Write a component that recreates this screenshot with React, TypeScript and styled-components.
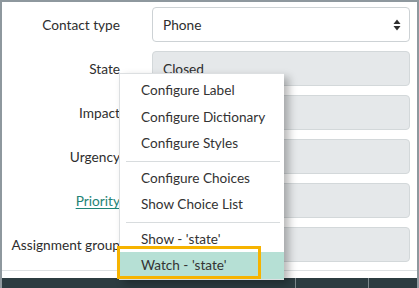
import { FC } from 'react'
import styled, { createGlobalStyle } from 'styled-components'

const GlobalStyle = createGlobalStyle`
  html, body {
    margin: 0;
    padding: 0;
    background: #fff;
  }
  body {
    font-family: 'Lato', 'Liberation Sans', sans-serif;
    color: #2e2e2e;
  }
`

const Frame = styled.div`
  position: relative;
  width: 419px;
  height: 288px;
  box-sizing: border-box;
  border-top: 2px solid #8e989e;
  border-left: 2px solid #8e989e;
  border-right: 2px solid #8e989e;
  overflow: hidden;
  display: flex;
  flex-direction: column;
`

const Form = styled.div`
  display: flex;
  flex-direction: column;
  gap: 9px;
  padding: 5px 7px 0 0;
`

const Row = styled.div`
  display: grid;
  grid-template-columns: 118px 1fr;
  column-gap: 32px;
  align-items: center;
  height: 35px;
`

const Label = styled.div<{ $link?: boolean }>`
  text-align: right;
  font-size: 13.7px;
  color: ${({ $link }) => ($link ? '#1f8476' : '#2e2e2e')};
  text-decoration: ${({ $link }) => ($link ? 'underline' : 'none')};
  text-underline-offset: 2px;
  white-space: nowrap;
`

const Field = styled.div<{ $select?: boolean }>`
  height: 35px;
  box-sizing: border-box;
  border: 1px solid ${({ $select }) => ($select ? '#cdd2d5' : '#d3d8da')};
  border-radius: 4px;
  background: ${({ $select }) => ($select ? '#fff' : '#e5e8ea')};
  display: flex;
  align-items: center;
  justify-content: space-between;
  padding: 0 8px 0 10px;
  font-size: 13.7px;
  color: #2e2e2e;
`

const Footer = styled.div`
  margin-top: auto;
  display: flex;
  flex-direction: column;
`

const FooterLine = styled.div`
  height: 1px;
  background: #dde1e3;
  margin-bottom: 7px;
`

const DarkBar = styled.div`
  height: 10px;
  background: #2c3c41;
  display: flex;
  padding-left: 293px;
  gap: 72px;
`

const BarTick = styled.div`
  width: 1px;
  height: 100%;
  background: #7c888c;
`

const Menu = styled.div`
  position: absolute;
  left: 117px;
  top: 71px;
  width: 164px;
  background: #fff;
  border: 1px solid #dcdfe1;
  border-right: none;
  box-shadow: 5px 4px 8px rgba(0, 0, 0, 0.28);
  padding-top: 3px;
  display: flex;
  flex-direction: column;
`

const MenuItem = styled.div<{ $active?: boolean }>`
  height: 26.5px;
  display: flex;
  align-items: center;
  padding-left: 21px;
  font-size: 13.6px;
  color: #333;
  background: ${({ $active }) => ($active ? '#b6e0d5' : 'transparent')};
  white-space: nowrap;
`

const Separator = styled.div`
  height: 1px;
  background: #d8dcde;
  margin: 4px 4px 3px 6px;
`

const Highlight = styled.div`
  position: absolute;
  left: 115px;
  top: 244px;
  width: 144px;
  height: 33px;
  box-sizing: border-box;
  border: 3px solid #f6b300;
`

const SelectArrows: FC = () => (
  <svg width='8' height='12' viewBox='0 0 8 12'>
    <path d='M4 0.5 L7.5 5 L0.5 5 Z' fill='#2e2e2e' />
    <path d='M4 11.5 L7.5 7 L0.5 7 Z' fill='#2e2e2e' />
  </svg>
)

const App: FC = () => {
  return (
    <>
      <GlobalStyle />
      <Frame>
        <Form>
          <Row>
            <Label>Contact type</Label>
            <Field $select>
              Phone
              <SelectArrows />
            </Field>
          </Row>
          <Row>
            <Label>State</Label>
            <Field>Closed</Field>
          </Row>
          <Row>
            <Label>Impact</Label>
            <Field />
          </Row>
          <Row>
            <Label>Urgency</Label>
            <Field />
          </Row>
          <Row>
            <Label $link>Priority</Label>
            <Field />
          </Row>
          <Row>
            <Label>Assignment group</Label>
            <Field />
          </Row>
        </Form>

        <Footer>
          <FooterLine />
          <DarkBar>
            <BarTick />
            <BarTick />
          </DarkBar>
        </Footer>

        <Menu>
          <MenuItem>Configure Label</MenuItem>
          <MenuItem>Configure Dictionary</MenuItem>
          <MenuItem>Configure Styles</MenuItem>
          <Separator />
          <MenuItem>Configure Choices</MenuItem>
          <MenuItem>Show Choice List</MenuItem>
          <Separator />
          <MenuItem>Show - 'state'</MenuItem>
          <MenuItem $active>Watch - 'state'</MenuItem>
        </Menu>
        <Highlight />
      </Frame>
    </>
  )
}

export default App
